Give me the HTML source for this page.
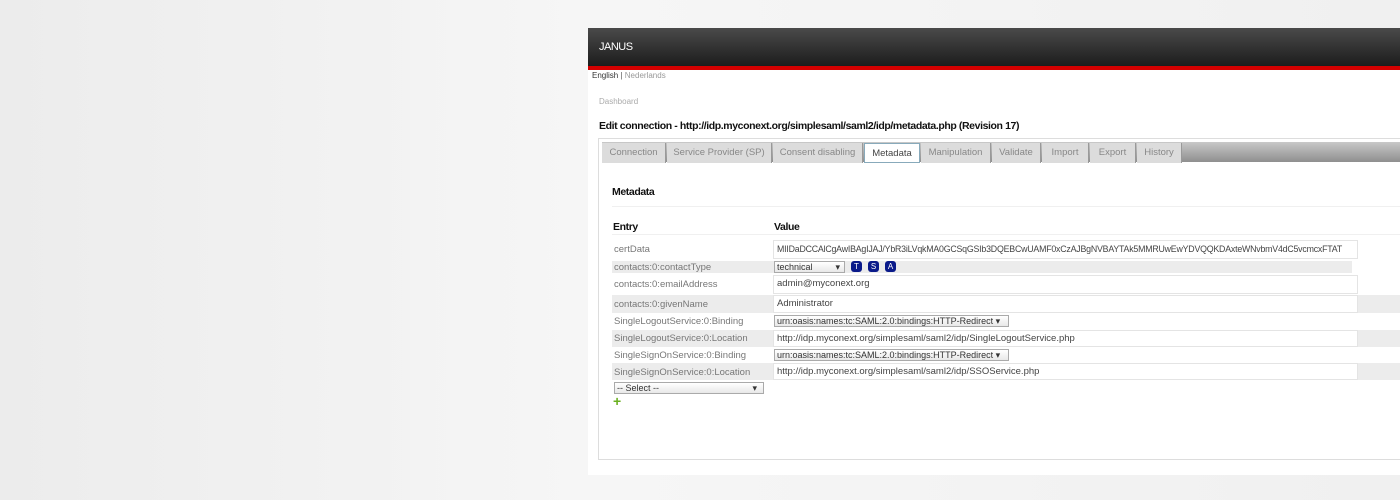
<!DOCTYPE html>
<html><head><style>
*{margin:0;padding:0;box-sizing:border-box}
body{width:1400px;height:500px;overflow:hidden;position:relative;background:linear-gradient(90deg,#ececec 0%,#f3f3f3 30%,#f6f6f6 42%,#f0f0f0 100%);font-family:"Liberation Sans",sans-serif}
.a{position:absolute;white-space:nowrap}
.page{position:absolute;left:588px;top:28px;width:812px;height:447px;background:#fff}
.hdr{position:absolute;left:0;top:0;width:812px;height:38px;background:linear-gradient(#4a4a4a,#1c1c1c)}
.red{position:absolute;left:0;top:38px;width:812px;height:4px;background:#d40000}
.box{position:absolute;left:10px;top:110px;width:802px;height:322px;border:1px solid #ddd;border-right:none}
.tabbar{position:absolute;left:14px;top:114px;width:798px;height:20px;background:linear-gradient(#c8c8c8,#8f8f8f)}
.tab{position:absolute;top:115px;height:20px;background:#dcdcdc;border-right:1px solid #999;font-size:9.5px;color:#888;line-height:20px;text-align:center}
.lbl{font-size:9.5px;color:#777}
.g{position:absolute;background:#ececec}
.inp{position:absolute;background:#fff;border:1px solid #e4e4e4;font-size:9.5px;color:#444;line-height:16px;padding-left:3px}
.sel{position:absolute;background:linear-gradient(#fff,#e8e8e8);border:1px solid #aaa;font-size:9px;color:#333;line-height:11px;padding-left:2px}
.b{position:absolute;top:233px;width:11px;height:11px;border-radius:3px;background:#0a1a8a;color:#fff;font-size:8px;line-height:11px;text-align:center}
</style></head><body>
<div class="page">
<div class="hdr"></div><div class="red"></div>
<div class="a" style="left:11px;top:13px;color:#fff;font-size:11px;letter-spacing:-0.5px">JANUS</div>
<div class="a" style="left:4px;top:43px;font-size:8px;color:#333">English <span style="color:#555">|</span> <span style="color:#999">Nederlands</span></div>
<div class="a" style="left:11px;top:69px;font-size:8px;color:#aaa">Dashboard</div>
<div class="a" style="left:11px;top:92px;font-size:10.5px;font-weight:bold;color:#111;letter-spacing:-0.4px">Edit connection - http://idp.myconext.org/simplesaml/saml2/idp/metadata.php (Revision 17)</div>
<div class="box"></div>
<div class="tabbar"></div>
<div class="tab" style="left:14px;width:64px">Connection</div>
<div class="tab" style="left:79px;width:105px">Service Provider (SP)</div>
<div class="tab" style="left:185px;width:90px">Consent disabling</div>
<div class="tab" style="left:276px;width:56px;background:#fff;border:1px solid #8ab;color:#444">Metadata</div>
<div class="tab" style="left:333px;width:70px">Manipulation</div>
<div class="tab" style="left:404px;width:49px">Validate</div>
<div class="tab" style="left:454px;width:47px">Import</div>
<div class="tab" style="left:502px;width:46px">Export</div>
<div class="tab" style="left:549px;width:45px">History</div>
<div class="a" style="left:24px;top:158px;font-size:10.5px;font-weight:bold;color:#111;letter-spacing:-0.4px">Metadata</div>
<div class="a" style="left:24px;top:178px;width:788px;height:1px;background:#f0f0f0"></div>
<div class="a" style="left:25px;top:193px;font-size:10.5px;font-weight:bold;color:#111;letter-spacing:-0.4px">Entry</div>
<div class="a" style="left:186px;top:193px;font-size:10.5px;font-weight:bold;color:#111;letter-spacing:-0.4px">Value</div>
<div class="a" style="left:24px;top:206px;width:788px;height:1px;background:#f0f0f0"></div>
<div class="g" style="left:24px;top:233px;width:740px;height:12px"></div>
<div class="g" style="left:24px;top:267px;width:162px;height:18px"></div>
<div class="g" style="left:770px;top:267px;width:42px;height:18px"></div>
<div class="g" style="left:24px;top:302px;width:162px;height:17px"></div>
<div class="g" style="left:770px;top:302px;width:42px;height:17px"></div>
<div class="g" style="left:24px;top:335px;width:162px;height:17px"></div>
<div class="g" style="left:770px;top:335px;width:42px;height:17px"></div>
<div class="a lbl" style="left:26px;top:216px">certData</div>
<div class="a lbl" style="left:26px;top:234px">contacts:0:contactType</div>
<div class="a lbl" style="left:26px;top:251px">contacts:0:emailAddress</div>
<div class="a lbl" style="left:26px;top:271px">contacts:0:givenName</div>
<div class="a lbl" style="left:26px;top:288px">SingleLogoutService:0:Binding</div>
<div class="a lbl" style="left:26px;top:305px">SingleLogoutService:0:Location</div>
<div class="a lbl" style="left:26px;top:322px">SingleSignOnService:0:Binding</div>
<div class="a lbl" style="left:26px;top:339px">SingleSignOnService:0:Location</div>
<div class="inp" style="left:185px;top:212px;width:585px;height:19px;font-size:8.8px;letter-spacing:-0.2px">MIIDaDCCAlCgAwIBAgIJAJ/YbR3iLVqkMA0GCSqGSIb3DQEBCwUAMF0xCzAJBgNVBAYTAk5MMRUwEwYDVQQKDAxteWNvbmV4dC5vcmcxFTAT</div>
<div class="sel" style="left:186px;top:233px;width:71px;height:12px">technical<span style="float:right;margin-right:4px">▾</span></div>
<div class="b" style="left:263px">T</div><div class="b" style="left:280px">S</div><div class="b" style="left:297px">A</div>
<div class="inp" style="left:185px;top:247px;width:585px;height:19px">admin@myconext.org</div>
<div class="inp" style="left:185px;top:267px;width:585px;height:18px">Administrator</div>
<div class="sel" style="left:186px;top:287px;width:235px;height:12px">urn:oasis:names:tc:SAML:2.0:bindings:HTTP-Redirect ▾</div>
<div class="inp" style="left:185px;top:302px;width:585px;height:17px">http://idp.myconext.org/simplesaml/saml2/idp/SingleLogoutService.php</div>
<div class="sel" style="left:186px;top:321px;width:235px;height:12px">urn:oasis:names:tc:SAML:2.0:bindings:HTTP-Redirect ▾</div>
<div class="inp" style="left:185px;top:335px;width:585px;height:17px">http://idp.myconext.org/simplesaml/saml2/idp/SSOService.php</div>
<div class="sel" style="left:26px;top:354px;width:150px;height:12px">-- Select --<span style="float:right;margin-right:6px">▾</span></div>
<div class="a" style="left:25px;top:367px;color:#6ab020;font-size:14px;font-weight:bold;line-height:12px">+</div>
</div>
</body></html>
